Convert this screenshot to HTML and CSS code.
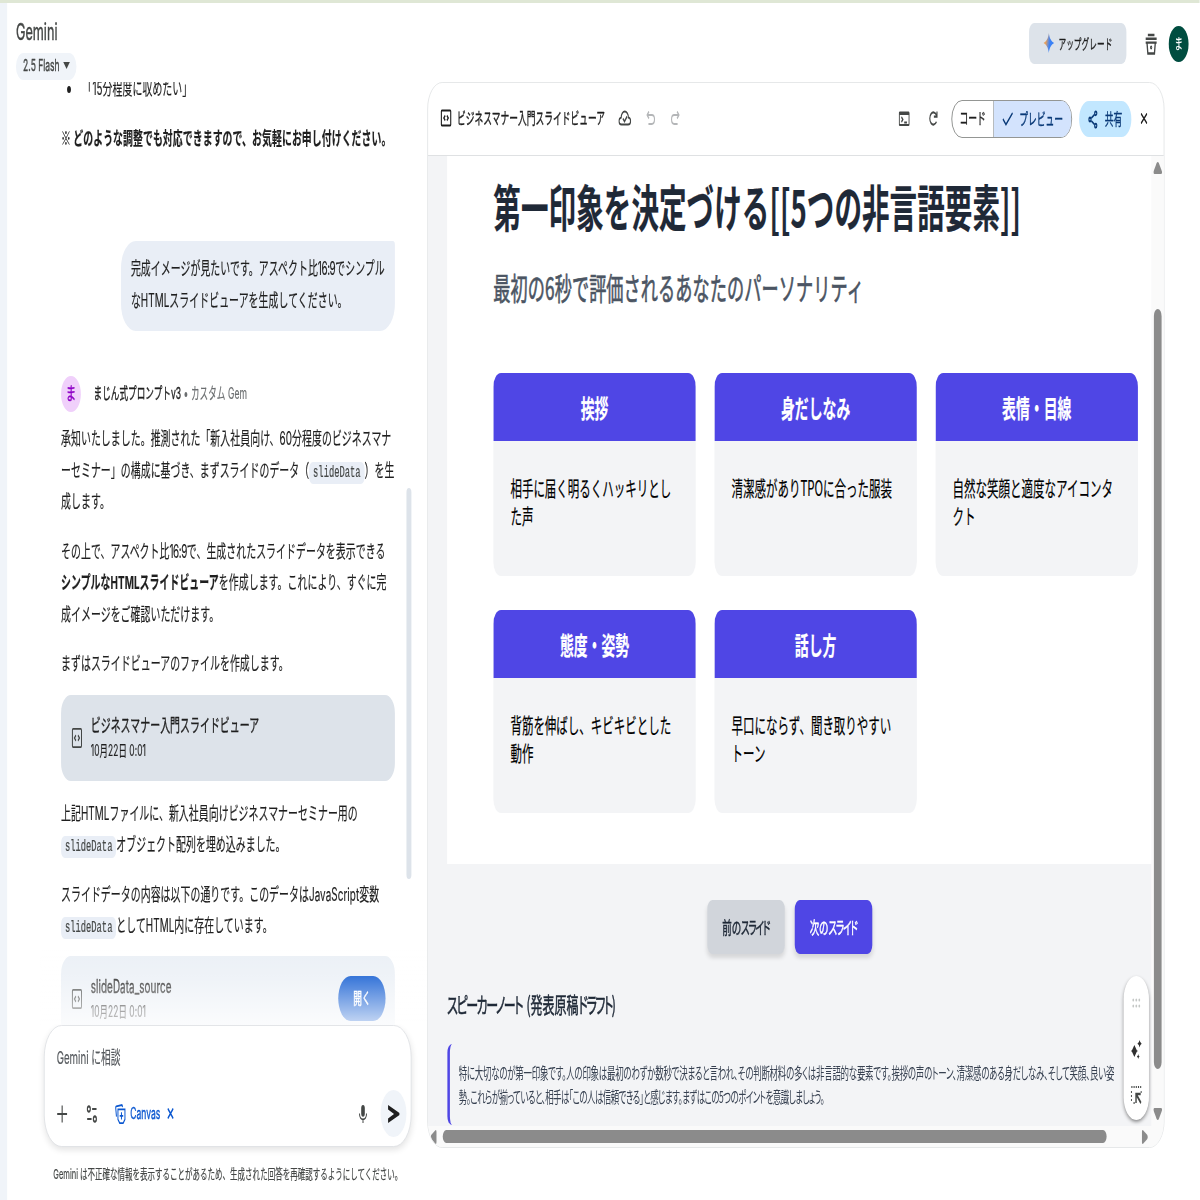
FILE: index.html
```html
<!DOCTYPE html>
<html lang="ja">
<head>
  <meta charset="UTF-8">
  <title>Gemini</title>
  <link rel="stylesheet" href="styles.css">
</head>
<body>
<div class="screen">
  <div class="rail"></div>
  <div class="main">
    <header class="top">
      <div class="brand">
        <div class="logo">Gemini</div>
        <div class="model">2.5 Flash <span class="caret"></span></div>
      </div>
      <div class="account">
        <button class="upgrade">
          <svg width="20" height="20" viewBox="0 0 24 24">
            <defs><linearGradient id="spark" x1="0" x2="1" y1="0" y2="0.2"><stop offset="0.3" stop-color="#e8a05a"/><stop offset="0.5" stop-color="#7a8fc4"/><stop offset="0.65" stop-color="#3b82f6"/></linearGradient></defs>
            <path fill="url(#spark)" d="M12 0C13 6 18 11 24 12C18 13 13 18 12 24C11 18 6 13 0 12C6 11 11 6 12 0ZM12 3l7 9-7 9-7-9z"/>
          </svg>
          <span>アップグレード</span>
        </button>
        <svg class="bin" width="22" height="22" viewBox="0 0 22 22" fill="none" stroke="#444746" stroke-width="2.400"><path d="M5 2h12M1 5.800h20M1 9.600h20M3.500 10l1.500 10.500h12L18.500 10"/><circle cx="11" cy="14.500" r=".8"/></svg>
        <div class="avatar">ま</div>
      </div>
    </header>

    <div class="content">
      <section class="chat">
        <div class="log">
          <ul><li>「15分程度に収めたい」</li></ul>
          <p class="note"><span>※ </span><b>どのような調整でも対応できますので、お気軽にお申し付けください。</b></p>
          <div class="bubble">完成イメージが見たいです。アスペクト比<span class="ratio">16:9</span>でシンプル<br>なHTMLスライドビューアを生成してください。</div>
          <div class="author">
            <div class="gem">ま</div>
            <div class="gem-name">まじん式プロンプトv3 <span>• カスタム Gem</span></div>
          </div>
          <p>承知いたしました。推測された「新入社員向け、60分程度のビジネスマナ<br>ーセミナー」の構成に基づき、まずスライドのデータ（<code>slideData</code>）を生<br>成します。</p>
          <p>その上で、アスペクト比<span class="ratio">16:9</span>で、生成されたスライドデータを表示できる<br><b>シンプルなHTMLスライドビューア</b>を作成します。これにより、すぐに完<br>成イメージをご確認いただけます。</p>
          <p>まずはスライドビューアのファイルを作成します。</p>
          <div class="file">
            <svg width="22" height="22" viewBox="0 0 24 24" fill="none" stroke="#444746" stroke-width="2"><rect x="4" y="2" width="18" height="20" rx="1.500"/><path d="M11 9l-3 3 3 3M15 9l3 3-3 3"/></svg>
            <div>
              <div class="file-name">ビジネスマナー入門スライドビューア</div>
              <div class="file-date">10月22日 0:01</div>
            </div>
          </div>
          <p>上記HTMLファイルに、新入社員向けビジネスマナーセミナー用の<br><code>slideData</code>オブジェクト配列を埋め込みました。</p>
          <p>スライドデータの内容は以下の通りです。このデータはJavaScript変数<br><code>slideData</code>としてHTML内に存在しています。</p>
          <div class="file file-light">
            <svg width="22" height="22" viewBox="0 0 24 24" fill="none" stroke="#444746" stroke-width="2"><rect x="4" y="2" width="18" height="20" rx="1.500"/><path d="M11 9l-3 3 3 3M15 9l3 3-3 3"/></svg>
            <div>
              <div class="file-name">slideData_source</div>
              <div class="file-date">10月22日 0:01</div>
            </div>
            <button class="open">開く</button>
          </div>
          <div class="fade"></div>
          <div class="chat-thumb"></div>
        </div>

        <div class="prompt">
          <div class="placeholder">Gemini に相談</div>
          <div class="tools">
            <svg class="plus" width="20" height="20" viewBox="0 0 20 20" stroke="#444746" stroke-width="2"><path d="M10 1.500v17M1 10h18"/></svg>
            <svg class="tune" width="20" height="18" viewBox="0 0 20 18" fill="none" stroke="#444746" stroke-width="2.200"><circle cx="4.500" cy="4" r="2.700"/><path d="M10.500 4h8M1.500 14h8"/><circle cx="15.500" cy="14" r="2.700"/></svg>
            <svg class="canvas-icon" width="22" height="20" viewBox="0 0 22 22" fill="none" stroke="#0b57d0" stroke-width="2"><path d="M3 14L1.500 4Q1.500 3 2.500 2.700L14 1.200l1.500 2"/><path d="M6 6h14v11l-3.500 4h-7L6 17z"/><path d="M13 9v8M9.500 13h7"/></svg>
            <span class="canvas-label">Canvas</span>
            <svg width="12" height="11" viewBox="0 0 12 11" stroke="#0b57d0" stroke-width="2.200"><path d="M1 .5l10 10M11 .5L1 10.500"/></svg>
            <svg class="mic" width="18" height="20" viewBox="0 0 18 22" fill="none" stroke="#444746" stroke-width="2"><rect x="6.500" y="2" width="5" height="11" rx="2.500" fill="#444746"/><path d="M2 10.500c0 4 3 6.500 7 6.500s7-2.500 7-6.500M9 17v4"/></svg>
            <div class="send"><svg width="23" height="18" viewBox="0 0 24 20"><path fill="#1f1f1f" d="M1 0L24 9v2L1 20v-5l12-5L1 5z"/></svg></div>
          </div>
        </div>
        <div class="disclaimer">Gemini は不正確な情報を表示することがあるため、生成された回答を再確認するようにしてください。</div>
      </section>

      <section class="panel">
        <div class="panel-head">
          <svg width="22" height="18" viewBox="0 0 22 18" fill="none" stroke="#1f1f1f" stroke-width="2"><rect x="2.500" y="1.500" width="17" height="15" rx="1"/><path d="M9.500 6.500L7 9l2.500 2.500M12.500 6.500L15 9l-2.500 2.500"/></svg>
          <span class="doc-name">ビジネスマナー入門スライドビューア</span>
          <svg class="cloud" width="24" height="16" viewBox="0 0 24 16" fill="none" stroke="#444746" stroke-width="2"><path d="M6 14.500C3 14.500 1.500 13 1.500 11S3 8 5.500 7.500C5.500 4 8.500 1.500 12 1.500s6.500 2.500 6.500 6c2.500.3 4 1.500 4 3.500s-1.700 3.500-4.500 3.500z"/><path d="M8.500 8.500l3 3 4.500-5"/></svg>
          <svg class="undo" width="16" height="14" viewBox="0 0 16 14" fill="none" stroke="#b4b6b8" stroke-width="2"><path d="M5 .5L1.500 4 5 7.500M2 4h8c3 0 5 1.500 5 4.300S13 13 10 13H4"/></svg>
          <svg class="redo" width="16" height="14" viewBox="0 0 16 14" fill="none" stroke="#b4b6b8" stroke-width="2"><path d="M11 .5L14.500 4 11 7.500M14 4H6C3 4 1 5.500 1 8.300S3 13 6 13h6"/></svg>
          <svg class="console" width="20" height="15" viewBox="0 0 20 15" fill="none" stroke="#444746" stroke-width="2"><rect x="1" y="1.500" width="18" height="12.500" rx="1"/><path d="M1 3h18M5 6l2.500 2.500L5 11M10 11.500h5"/></svg>
          <svg class="reload" width="17" height="15" viewBox="0 0 18 16" fill="none" stroke="#444746" stroke-width="2.200"><path d="M14.500 11.500A7 6.500 0 1 1 14.500 4.500M15.500 0.500v5.500h-6"/></svg>
          <div class="switch">
            <span class="code-tab">コード</span>
            <span class="preview-tab"><svg width="20" height="14" viewBox="0 0 20 14" fill="none" stroke="#0a3a78" stroke-width="2"><path d="M1.500 7l5.500 5.500L19 1"/></svg>プレビュー</span>
          </div>
          <div class="share"><svg width="19" height="19" viewBox="0 0 19 20" fill="none" stroke="#0a3a78" stroke-width="2.200"><circle cx="3.500" cy="10" r="2"/><circle cx="14.500" cy="3.500" r="2"/><circle cx="14.500" cy="16.500" r="2"/><path d="M6 8.500l6.500-4M6 11.500l6.500 4"/></svg>共有</div>
          <svg width="12" height="11" viewBox="0 0 12 11" stroke="#1f1f1f" stroke-width="2"><path d="M.5.5l11 10M11.500.5l-11 10"/></svg>
        </div>

        <div class="viewport">
          <div class="page">
            <div class="slide">
              <h1>第一印象を決定づける[[5つの非言語要素]]</h1>
              <h2>最初の6秒で評価されるあなたのパーソナリティ</h2>
              <div class="cards">
                <div class="card"><h3>挨拶</h3><p>相手に届く明るくハッキリとし<br>た声</p></div>
                <div class="card"><h3>身だしなみ</h3><p>清潔感がありTPOに合った服装</p></div>
                <div class="card"><h3>表情・目線</h3><p>自然な笑顔と適度なアイコンタ<br>クト</p></div>
                <div class="card"><h3>態度・姿勢</h3><p>背筋を伸ばし、キビキビとした<br>動作</p></div>
                <div class="card"><h3>話し方</h3><p>早口にならず、聞き取りやすい<br>トーン</p></div>
              </div>
            </div>
            <div class="nav">
              <button class="prev">前の<span>スライド</span></button>
              <button class="next">次の<span>スライド</span></button>
            </div>
            <h4><span>スピーカーノート</span> (発表原稿<span>ドラフト</span>)</h4>
            <div class="speaker">特に大切なのが第一印象です。人の印象は最初のわずか数秒で決まると言われ、その判断材料の多くは非言語的な要素です。挨拶の声のトーン、清潔感のある身だしなみ、そして笑顔、良い姿<br><span>勢。これらが揃っていると、相手は「この人は信頼できる」と感じます。まずはこの5つのポイントを意識しましょう。</span></div>
          </div>
          <div class="vbar">
            <svg width="16" height="12" viewBox="0 0 16 12"><path fill="#8b8b8b" d="M6 1q2-2 4 0l6 9q0 2-2 2H2q-2 0-2-2z"/></svg>
            <div class="vthumb"></div>
            <svg width="16" height="12" viewBox="0 0 16 12"><path fill="#8b8b8b" d="M6 11q2 2 4 0l6-9q0-2-2-2H2Q0 0 0 2z"/></svg>
          </div>
        </div>
        <div class="hbar">
          <svg width="11" height="14" viewBox="0 0 11 14"><path fill="#8b8b8b" d="M1 5q-2 2 0 4l8 5q2 0 2-2V2q0-2-2-2z"/></svg>
          <div class="hthumb"></div>
          <svg width="11" height="14" viewBox="0 0 11 14"><path fill="#8b8b8b" d="M10 5q2 2 0 4l-8 5q-2 0-2-2V2q0-2 2-2z"/></svg>
        </div>
        <div class="floating">
          <svg width="16" height="10" viewBox="0 0 16 10" fill="#c4c7c5"><circle cx="2.500" cy="2" r="1.600"/><circle cx="8" cy="2" r="1.600"/><circle cx="13.500" cy="2" r="1.600"/><circle cx="2.500" cy="8" r="1.600"/><circle cx="8" cy="8" r="1.600"/><circle cx="13.500" cy="8" r="1.600"/></svg>
          <svg width="20" height="19" viewBox="0 0 20 19" fill="#303030"><path d="M6.500 5Q8 10 13 11Q8 12 6.500 17Q5 12 0 11Q5 10 6.500 5ZM6.500 5l5 6-5 6-5-6zM16 0q.8 3 4 3.700-3.200.8-4 3.700-.8-3-4-3.700 3.200-.8 4-3.700zM13.500 14q.5 2 2.500 2.500-2 .5-2.500 2.500-.5-2-2.500-2.500 2-.5 2.500-2.500z"/></svg>
          <svg width="20" height="18" viewBox="0 0 20 18" fill="none" stroke="#444746" stroke-width="2"><path stroke-dasharray="2 2" d="M1 1h18M1 5v12M19 5v2M5 17h4"/><path stroke-width="2.600" d="M9.500 17V8H18M10 8.500l8.500 8.500"/></svg>
        </div>
      </section>
    </div>
  </div>
</div>
</body>
</html>
```
FILE: styles.css
```css
* { box-sizing: border-box; }
html { overflow: hidden; }
body { margin: 0; width: 1200px; height: 1200px; overflow: hidden; background: #fff; }
h1, h2, h3, h4, p, ul { margin: 0; padding: 0; }
button { border: 0; padding: 0; font-family: inherit; white-space: nowrap; }
svg { display: block; flex: none; }

/* wide desktop view, condensed to fit the window */
.screen {
  display: flex;
  width: 2181px;
  height: 1200px;
  margin-right: -981px;
  overflow: hidden;
  border-top: 3px solid #dfe7d5;
  transform: scaleX(0.55);
  transform-origin: 0 0;
  font-family: Inter, "Noto Sans CJK JP", sans-serif;
  font-size: 18px;
  color: #1f1f1f;
  -webkit-text-stroke: 0.2px;
}
.rail { width: 13px; background: #f0f4f9; }
.main { flex: 1; display: flex; flex-direction: column; }

.top { display: flex; justify-content: space-between; height: 79px; padding: 0 20px 0 16px; }
.logo { margin-top: 13px; font-size: 23px; line-height: 32px; color: #444746; -webkit-text-stroke: 0.5px; }
.model { display: flex; align-items: center; width: 110px; height: 27px; margin-top: 5px; padding: 0 0 2px 13px; border-radius: 14px; background: #f0f4f9; font-size: 15.5px; color: #444746; white-space: nowrap; -webkit-text-stroke: 0.4px; }
.caret { margin-left: 7px; border: 6px solid transparent; border-top: 7px solid #444746; border-bottom: 0; }
.account { display: flex; align-items: center; height: 82px; }
.upgrade { display: flex; align-items: center; justify-content: center; gap: 8px; width: 177px; height: 41px; margin-top: -2px; border-radius: 9px; background: #dde3ea; font-size: 14px; color: #1f1f1f; -webkit-text-stroke: 0.3px; }
.bin { margin-left: 34px; }
.avatar { width: 36px; height: 36px; margin-left: 21px; border-radius: 50%; background: #004d40; color: #fff; font-size: 15px; line-height: 36px; text-align: center; }

.content { flex: 1; display: flex; }
.chat { width: 764px; }
.log { position: relative; height: 943px; padding-left: 98px; overflow: hidden; line-height: 31.5px; letter-spacing: 0.1px; white-space: nowrap; }
.log > p { margin-bottom: 18px; width: 620px; }
.log ul { height: 31px; margin-top: -9px; list-style: none; }
.log li::before { content: ""; display: inline-block; width: 7px; height: 7px; margin: 0 21px 2px 11px; border-radius: 50%; background: #1f1f1f; }
.log .note { height: 32px; margin: 18px 0 87px; }
.note span { font-family: "Noto Sans CJK JP", sans-serif; }
.ratio { letter-spacing: -0.8px; }
.bubble { width: 498px; height: 90px; margin-left: 109px; padding: 12px 18px; border-radius: 27px 4px 27px 27px; background: #e9eef6; }
.author { display: flex; align-items: center; gap: 23px; height: 36px; margin: 45px 0 11px; }
.gem { width: 36px; height: 36px; border-radius: 50%; background: #f0d0fb; color: #8e00c6; font-size: 18px; line-height: 36px; text-align: center; -webkit-text-stroke: 0.5px; }
.gem-name { font-size: 15.6px; -webkit-text-stroke: 0.4px; }
.gem-name span { color: #6b6e70; -webkit-text-stroke: 0.2px; }
code { padding: 2px 7px; border-radius: 7px; background: #e9eef6; font: 16px "Liberation Mono", monospace; letter-spacing: 0; color: #444746; }
.file { display: flex; align-items: center; width: 607px; height: 86px; margin: -3px 0 17px; padding: 0 17px; gap: 15px; border-radius: 18px; background: #dde3ea; }
.file-name { font-size: 18px; line-height: 26px; -webkit-text-stroke: 0.4px; }
.file-date { font-size: 15.3px; line-height: 24px; }
.file-light { margin-top: -4px; background: #ebf0f6; }
.file-light .open { width: 86px; height: 45px; margin-left: auto; padding-bottom: 3px; border-radius: 23px; background: #0b57d0; color: #fff; font-size: 15.7px; -webkit-text-stroke: 0.5px; }
.fade { position: absolute; left: 60px; right: 0; bottom: 0; height: 76px; background: linear-gradient(#ffffff00, #ffffff30 37%, #ffffffc8); }
.chat-thumb { position: absolute; left: 726px; top: 406px; width: 9px; height: 391px; border-radius: 5px; background: #dde3ea; }

.prompt { width: 668px; height: 122px; margin-left: 67px; border: 1px solid #dcdfe2; border-radius: 32px; background: #fff; box-shadow: 0 3px 8px #0000001c; padding: 16px 8px 0 22px; }
.placeholder { line-height: 31px; color: #575b5f; font-size: 17.7px; }
.tools { display: flex; align-items: center; height: 47px; margin-top: 17px; color: #0b57d0; font-size: 15.5px; }
.tune { margin-left: 34px; }
.canvas-icon { margin-left: 31px; }
.canvas-label { margin: 0 13px 0 7px; -webkit-text-stroke: 0.4px; }
.mic { margin-left: auto; }
.send { display: flex; align-items: center; justify-content: center; width: 47px; height: 47px; margin-left: 23px; border-radius: 50%; background: #f0f4f9; }
.disclaimer { margin: 17px 0 0 84px; font-size: 13.65px; line-height: 20px; color: #444746; white-space: nowrap; }

.panel { position: relative; display: flex; flex-direction: column; width: 1340px; height: 1066px; border: 1px solid #dfe1e3; border-radius: 27px; background: #fff; overflow: hidden; }
.panel-head { display: flex; align-items: center; height: 73px; padding: 0 30px 2px 22px; border-bottom: 1px solid #dfe1e3; white-space: nowrap; }
.doc-name { margin: -2px 0 0 9px; font-size: 15.9px; -webkit-text-stroke: 0.4px; }
.cloud { margin-left: 24px; }
.undo { margin-left: 27px; }
.redo { margin-left: 29px; }
.console { margin-left: auto; }
.reload { margin-left: 35px; }
.switch { display: flex; width: 219px; height: 38px; margin: 1px 0 0 24px; border: 1px solid #747775; border-radius: 19px; overflow: hidden; font-size: 16px; line-height: 34px; -webkit-text-stroke: 0.4px; }
.code-tab { width: 76px; border-right: 1px solid #747775; text-align: center; }
.preview-tab { flex: 1; display: flex; align-items: center; justify-content: center; gap: 11px; background: #d3e3fd; color: #0a3a78; }
.share { display: flex; align-items: center; justify-content: center; gap: 11px; width: 95px; height: 36px; margin: 2px 17px 0 13px; border-radius: 18px; background: #c2e7ff; color: #0a3a78; font-size: 16px; line-height: 34px; -webkit-text-stroke: 0.4px; }

.viewport { display: flex; height: 970px; font-family: "Noto Sans CJK JP", sans-serif; }
.page { width: 1316px; padding-left: 35px; background: #f3f4f6; overflow: hidden; white-space: nowrap; }
.slide { height: 708px; padding: 14px 0 0 84px; background: #fff; }
.slide h1 { font-size: 50px; line-height: 70px; letter-spacing: 0.2px; color: #1f2937; }
.slide h2 { margin-top: 26px; font-size: 31.2px; line-height: 42px; letter-spacing: 0.15px; font-weight: 400; color: #4b5563; -webkit-text-stroke: 0.7px; }
.cards { display: grid; grid-template-columns: repeat(3, 368px); gap: 34px; margin-top: 65px; }
.card { height: 203px; border-radius: 14px; background: #f3f4f6; overflow: hidden; color: #000; }
.card h3 { height: 68px; background: #4f46e5; color: #fff; font-size: 25.2px; line-height: 68px; text-align: center; }
.card p { padding: 32px 31px; font-size: 20.9px; line-height: 28.3px; }
.nav { display: flex; justify-content: center; gap: 18px; margin-top: 36px; padding-right: 36px; }
.nav button { width: 141px; height: 54px; padding-bottom: 1px; border-radius: 9px; font-size: 17.3px; font-feature-settings: "palt"; box-shadow: 0 4px 6px #0000001f; -webkit-text-stroke: 0.5px; }
.nav span { letter-spacing: -2px; }
.prev { background: #d1d5db; color: #1f2937; }
.next { background: #4f46e5; color: #fff; }
.page h4 { margin-top: 34px; font-size: 21.8px; line-height: 32px; font-weight: 400; font-feature-settings: "palt"; color: #1f2937; -webkit-text-stroke: 0.6px; }
.page h4 span { letter-spacing: -2.6px; }
.page h4 span:first-child { margin-right: 3px; }
.speaker { height: 81px; margin-top: 24px; padding: 16px 0 0 16px; border-left: 5px solid #4f46e5; border-radius: 9px; font-size: 15.4px; line-height: 24px; letter-spacing: -0.45px; font-feature-settings: "palt"; color: #374151; -webkit-text-stroke: 0; }
.speaker span { letter-spacing: -1px; }

.vbar { flex: 1; display: flex; flex-direction: column; align-items: center; background: #fafafa; padding: 6px 0 0; }
.vthumb { width: 14px; height: 760px; margin: 135px 0 39px; border-radius: 7px; background: #8b8b8b; }
.hbar { flex: 1; display: flex; align-items: center; background: #fafafa; padding-left: 5px; }
.hthumb { width: 1207px; height: 13px; margin: 0 64px 0 11px; border-radius: 7px; background: #8b8b8b; }
.floating { position: absolute; left: 1265px; top: 893px; width: 46px; height: 144px; border-radius: 23px; background: #fff; box-shadow: 0 2px 5px #0000006e; display: flex; flex-direction: column; align-items: center; padding-top: 22px; gap: 32px; }
.floating svg:last-child { margin-top: -5px; }
```
